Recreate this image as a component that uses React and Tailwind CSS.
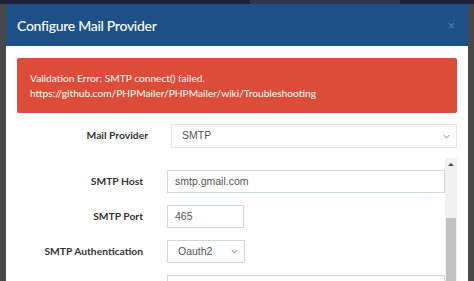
import React from 'react';

const labelFont = { fontFamily: 'Lato, "Noto Sans", sans-serif' };

function Chevron({ className }) {
  return (
    <svg viewBox="0 0 10 6" className={className} fill="none" stroke="currentColor" strokeWidth="1.2">
      <path d="M1 1l4 4 4-4" />
    </svg>
  );
}

function Row({ label, children }) {
  return (
    <div className="flex items-center h-[23px] mb-[12px]">
      <div className="w-[150px] shrink-0 pr-[24px] text-right text-[10.3px] font-bold text-[#333]" style={labelFont}>
        {label}
      </div>
      {children}
    </div>
  );
}

export default function App() {
  return (
    <div className="w-[474px] h-[281px] overflow-hidden bg-[#484848] flex flex-col font-['Liberation_Sans',Arial,sans-serif]">
      {/* page behind the backdrop */}
      <div className="h-[4px] shrink-0 bg-[#1f1f38] flex">
        <div className="ml-[250px] w-[150px] bg-[#34344c]" />
      </div>

      <div className="flex-1 min-h-0 flex px-[6px]">
        <div className="flex-1 bg-white flex flex-col min-h-0">
          {/* header */}
          <div className="h-[42px] shrink-0 bg-[#1c5087] flex items-center justify-between pl-[11px] pr-[13px]">
            <h2 className="text-white text-[14px] font-medium tracking-[-0.3px]" style={labelFont}>Configure Mail Provider</h2>
            <span className="text-[#5a7fa8] text-[13px] leading-none">×</span>
          </div>

          {/* body */}
          <div className="flex-1 min-h-0 flex flex-col px-[11px] pt-[12px]">
            <div className="bg-[#dd4b39] rounded-[2px] h-[55px] shrink-0 px-[13px] pt-[1px] flex flex-col justify-center text-white text-[10.2px] leading-[15px]" style={labelFont}>
              <div>Validation Error: SMTP connect() failed.</div>
              <div>https://github.com/PHPMailer/PHPMailer/wiki/Troubleshooting</div>
            </div>

            <div className="flex items-center mt-[11px] h-[24px] shrink-0">
              <div className="w-[131px] shrink-0 text-right text-[10.3px] font-bold text-[#333]" style={labelFont}>
                Mail Provider
              </div>
              <div className="ml-[23px] flex-1 h-[24px] border border-[#e3e6ea] flex items-center justify-between pl-[10px] pr-[6px] text-[10.5px] text-[#555]">
                <span>SMTP</span>
                <Chevron className="w-[7px] h-[5px] text-[#666]" />
              </div>
            </div>

            {/* scrolling settings area */}
            <div className="flex-1 min-h-0 flex mt-[10px]">
              <div className="flex-1 pt-[12px] overflow-hidden">
                <Row label="SMTP Host">
                  <div className="flex-1 h-[23px] border border-[#d2d6de] flex items-center px-[7px] text-[10.5px] text-[#555]">smtp.gmail.com</div>
                </Row>
                <Row label="SMTP Port">
                  <div className="w-[77px] h-[23px] border border-[#d2d6de] flex items-center px-[7px] text-[10.5px] text-[#555]">465</div>
                </Row>
                <Row label="SMTP Authentication">
                  <div className="w-[78px] h-[23px] border border-[#d2d6de] flex items-center justify-between pl-[10px] pr-[6px] text-[10.5px] text-[#555]">
                    <span>Oauth2</span>
                    <Chevron className="w-[7px] h-[5px] text-[#666]" />
                  </div>
                </Row>
                <Row label="">
                  <div className="flex-1 h-[23px] border border-[#d2d6de]" />
                </Row>
              </div>
              <div className="w-[12px] bg-[#f1f1f1] flex flex-col items-center">
                <div className="h-[12px] flex items-center">
                  <div className="w-0 h-0 border-l-[3px] border-r-[3px] border-b-[3px] border-l-transparent border-r-transparent border-b-[#505050]" />
                </div>
                <div className="mt-[48px] flex-1 w-[10px] bg-[#c1c1c1]" />
              </div>
            </div>
          </div>
        </div>
      </div>
    </div>
  );
}
